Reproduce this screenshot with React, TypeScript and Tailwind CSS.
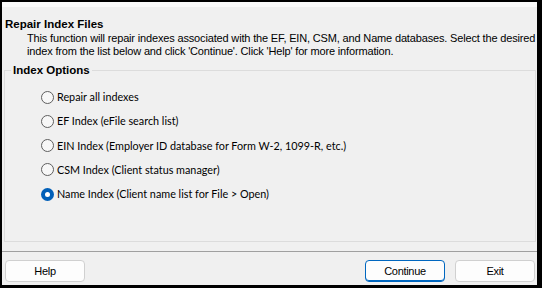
import React from "react";

const sans = { fontFamily: '"Liberation Sans", Arial, sans-serif' };
const ui = { fontFamily: 'Lato, "Liberation Sans", sans-serif' };

function Radio({ label, checked }: { label: string; checked?: boolean }) {
  return (
    <div className="flex h-[24.25px] items-center">
      {checked ? (
        <span className="flex h-[13px] w-[13px] items-center justify-center rounded-full bg-[#005fb8]">
          <span className="h-[5px] w-[5px] rounded-full bg-white" />
        </span>
      ) : (
        <span className="h-[13px] w-[13px] rounded-full border border-[#5f5f5f] bg-[#f7f7f7]" />
      )}
      <span className="ml-[3px] text-[10.8px] leading-[16px] text-black" style={ui}>
        {label}
      </span>
    </div>
  );
}

function Btn({ label, primary }: { label: string; primary?: boolean }) {
  return (
    <button
      className={
        "flex h-[22px] w-[80px] items-center justify-center rounded-[4px] border bg-[#fdfdfd] text-[11px] tracking-[-0.3px] text-black " +
        (primary ? "border-[#0067c0] shadow-[inset_0_-1px_0_#0067c0]" : "border-[#d0d0d0]")
      }
      style={sans}
    >
      {label}
    </button>
  );
}

export default function App() {
  return (
    <div className="h-[288px] w-[542px] bg-black pb-[3px] pl-[2px] pr-[5px] pt-[2px]">
      <div className="flex h-full w-full flex-col bg-[#f0f0f0]">
        <div className="h-[5px] bg-[#fafafa]" />
        <div className="mt-[11px] pl-[3px] text-[11.5px] font-bold leading-[13px] text-black" style={sans}>
          Repair Index Files
        </div>
        <div className="mt-[1px] whitespace-nowrap pl-[25px] text-[11px] leading-[13px] tracking-[-0.16px] text-black" style={sans}>
          This function will repair indexes associated with the EF, EIN, CSM, and Name databases. Select the desired
          <br />
          index from the list below and click 'Continue'. Click 'Help' for more information.
        </div>
        <div className="relative ml-[2px] mt-[12px] h-[172px] w-[532px] border border-[#dcdcdc] pl-[36px] pt-[14px]">
          <div
            className="absolute left-[6px] top-[-8px] bg-[#f0f0f0] px-[2px] text-[11.5px] font-bold leading-[14px] text-black"
            style={sans}
          >
            Index Options
          </div>
          <Radio label="Repair all indexes" />
          <Radio label="EF Index (eFile search list)" />
          <Radio label="EIN Index (Employer ID database for Form W-2, 1099-R, etc.)" />
          <Radio label="CSM Index (Client status manager)" />
          <Radio label="Name Index (Client name list for File > Open)" checked />
        </div>
        <div className="mt-[9px] h-px bg-[#a0a0a0]" />
        <div className="mt-[8px] flex pl-[3px] pr-[2px]">
          <Btn label="Help" />
          <div className="flex-1" />
          <div className="flex gap-[10px]">
            <Btn label="Continue" primary />
            <Btn label="Exit" />
          </div>
        </div>
      </div>
    </div>
  );
}
